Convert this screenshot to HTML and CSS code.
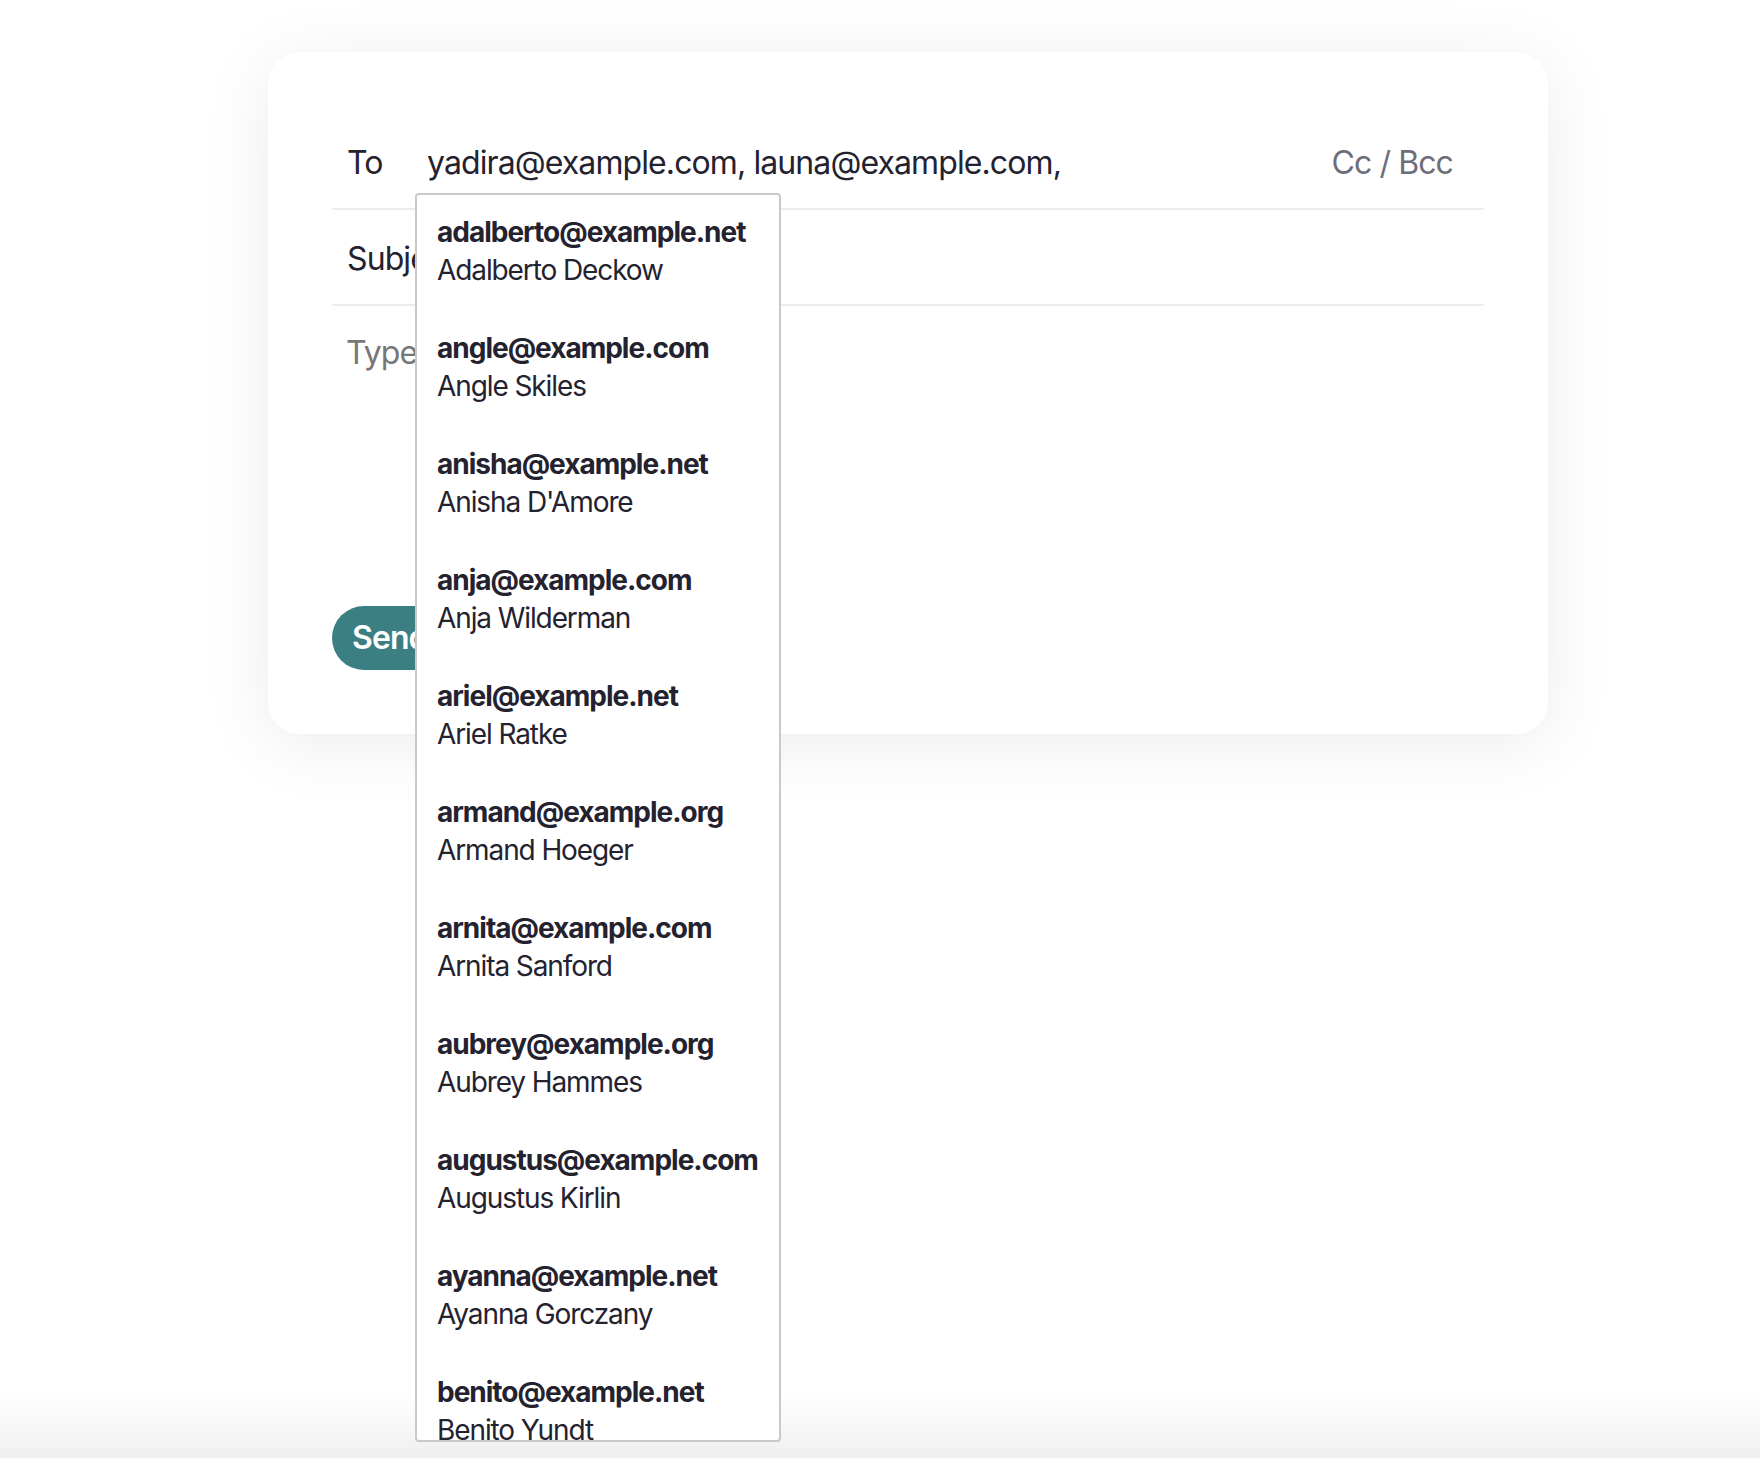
FILE: index.html
```html
<!DOCTYPE html>
<html lang="en">
<head>
  <meta charset="UTF-8" />
  <title>New Message</title>
  <meta name="viewport" content="width=device-width, initial-scale=1" />
  <link rel="stylesheet" href="styles.css">
</head>
<body>

  <!-- COMPOSE CARD -->
  <form class="compose">

    <!-- TO -->
    <div class="row">
      <label class="row-label" for="to">To</label>
      <div class="to-field">
        <input type="text" id="to" class="field" value="yadira@example.com, launa@example.com," autocomplete="off" />

        <!-- SUGGESTIONS -->
        <ul class="suggestions">
          <li><strong>adalberto@example.net</strong><span>Adalberto Deckow</span></li>
          <li><strong>angle@example.com</strong><span>Angle Skiles</span></li>
          <li><strong>anisha@example.net</strong><span>Anisha D'Amore</span></li>
          <li><strong>anja@example.com</strong><span>Anja Wilderman</span></li>
          <li><strong>ariel@example.net</strong><span>Ariel Ratke</span></li>
          <li><strong>armand@example.org</strong><span>Armand Hoeger</span></li>
          <li><strong>arnita@example.com</strong><span>Arnita Sanford</span></li>
          <li><strong>aubrey@example.org</strong><span>Aubrey Hammes</span></li>
          <li><strong>augustus@example.com</strong><span>Augustus Kirlin</span></li>
          <li><strong>ayanna@example.net</strong><span>Ayanna Gorczany</span></li>
          <li><strong>benito@example.net</strong><span>Benito Yundt</span></li>
          <li><strong>bennie@example.com</strong><span>Bennie Kuhn</span></li>
        </ul>
      </div>
      <a href="#" class="cc-bcc">Cc / Bcc</a>
    </div>

    <!-- SUBJECT -->
    <div class="row">
      <label class="row-label" for="subject">Subject</label>
      <input type="text" id="subject" class="field" />
    </div>

    <!-- MESSAGE -->
    <textarea class="message" placeholder="Type your message"></textarea>

    <!-- SEND -->
    <button type="button" class="send">Send</button>
  </form>

</body>
</html>
```

FILE: styles.css
```css
html {
  min-height: 100%;
  background: linear-gradient(to bottom, #ffffff calc(100% - 64px), #efefef);
}

body {
  margin: 0;
  min-height: 100vh;
  font-family: Inter, "Noto Sans", sans-serif;
  color: #24222f;
  font-size: 32px;
  line-height: 48px;
  letter-spacing: -0.9px;
}

.compose {
  width: 1280px;
  box-sizing: border-box;
  margin: 52px 0 0 268px;
  padding: 64px;
  background-color: #fff;
  border-radius: 32px;
  box-shadow: 0 10px 70px rgba(0, 0, 0, 0.08);
}

.row {
  display: flex;
  align-items: center;
  padding: 23px 0 21px;
  border-bottom: 2px solid #ececec;
}

.row + .row {
  padding-top: 25px;
}

.row-label {
  flex: 0 0 95px;
  box-sizing: border-box;
  padding-left: 15px;
}

.to-field {
  position: relative;
  flex: 1;
}

.field {
  width: 100%;
  padding: 0;
  border: none;
  outline: none;
  background: transparent;
  font: inherit;
  letter-spacing: inherit;
  color: inherit;
}

.cc-bcc {
  padding: 0 31px 0 24px;
  color: #6e6d7a;
  text-decoration: none;
  white-space: nowrap;
}

.message {
  display: block;
  width: 100%;
  height: 268px;
  box-sizing: border-box;
  margin-bottom: 32px;
  padding: 23px 14px;
  border: none;
  outline: none;
  resize: none;
  font: inherit;
  letter-spacing: inherit;
  color: inherit;
}

.message::placeholder {
  color: #777777;
}

.send {
  height: 64px;
  padding: 0 20px;
  border: none;
  border-radius: 32px;
  background-color: #3c7f83;
  color: #fff;
  font: inherit;
  font-weight: 600;
  letter-spacing: inherit;
  cursor: pointer;
}

/* autocomplete list */
.suggestions {
  position: absolute;
  top: 54px;
  left: -12px;
  z-index: 10;
  width: 366px;
  height: 1249px;
  box-sizing: border-box;
  margin: 0;
  padding: 0;
  list-style: none;
  overflow: hidden;
  background-color: #fff;
  border: 2px solid #c9c9c9;
  border-radius: 4px;
  font-size: 28px;
  line-height: 38px;
}

.suggestions li {
  padding: 18px 20px 22px;
  cursor: pointer;
}

.suggestions strong,
.suggestions span {
  display: block;
  white-space: nowrap;
}

.suggestions strong {
  font-weight: 700;
  letter-spacing: -1px;
}

.suggestions span {
  letter-spacing: -1.1px;
}
```
